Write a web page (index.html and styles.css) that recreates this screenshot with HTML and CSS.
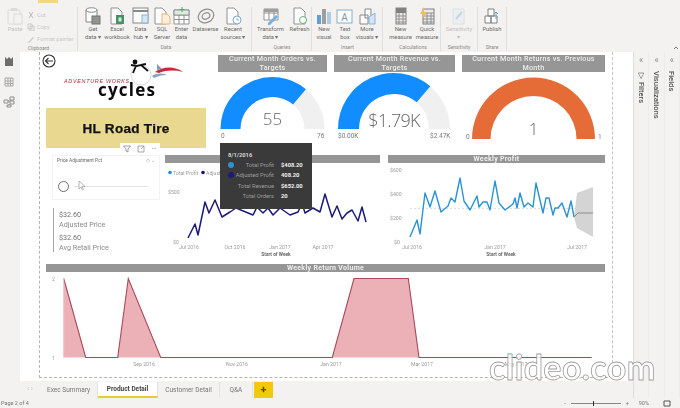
FILE: index.html
```html
<!DOCTYPE html>
<html lang="en">
<head>
<meta charset="utf-8">
<title>Product Detail</title>
<link rel="stylesheet" href="styles.css">
</head>
<body>
<div class="app">
  <header class="ribbon">
    <div class="home-mark"></div>
    <section class="group g-clip">
      <div class="btns clip-btns">
        <div class="btn w-24 faded">
          <svg class="ico" viewBox="0 0 20 18"><rect x="3" y="3" width="12" height="14" rx="1" fill="none" stroke="#d8d6d2"/><rect x="9" y="7" width="8" height="10" fill="#f3f2f1" stroke="#d8d6d2"/><rect x="6" y="1" width="6" height="3" fill="#d8d6d2"/></svg>
          <span>Paste</span>
        </div>
        <ul class="clip-list">
          <li><svg viewBox="0 0 8 8"><path d="M2 1l4 6M6 1L2 7" stroke="#bdbbb8" fill="none"/></svg>Cut</li>
          <li><svg viewBox="0 0 8 8"><path d="M1 1h4v5H1zM3 3h4v5H3z" stroke="#c4c2bf" fill="none" stroke-width=".8"/></svg>Copy</li>
          <li><svg viewBox="0 0 8 8"><path d="M1 7l5-5 1 1-5 5z" fill="#cfcdca"/></svg>Format painter</li>
        </ul>
      </div>
      <div class="group-label">Clipboard</div>
    </section>
    <section class="group g-data">
      <div class="btns">
        <div class="btn w-24">
          <svg class="ico" viewBox="0 0 20 18"><path d="M3 3c0-3 11-3 11 0v12H3z" fill="#fff" stroke="#6e6e6e"/><path d="M3 3c0 3 11 3 11 0" fill="none" stroke="#6e6e6e"/><rect x="9" y="9" width="8" height="8" fill="#7c7c7c" stroke="#555"/></svg>
          <span>Get<br>data ▾</span>
        </div>
        <div class="btn w-24">
          <svg class="ico" viewBox="0 0 20 18"><path d="M4 1h7l4 4v12H4z" fill="#fff" stroke="#7a7a7a"/><rect x="9" y="8" width="8" height="9" fill="#1b7a43"/><rect x="11.5" y="10.5" width="3" height="4" fill="#d5ead9"/></svg>
          <span>Excel<br>workbook</span>
        </div>
        <div class="btn w-23">
          <svg class="ico" viewBox="0 0 20 18"><rect x="2" y="1" width="15" height="15" fill="#fff" stroke="#6e6e6e"/><path d="M2 4h15" stroke="#6e6e6e" stroke-width="2"/><rect x="11" y="8" width="6" height="8" fill="#cfe3f2" stroke="#6fa8d4"/></svg>
          <span>Data<br>hub ▾</span>
        </div>
        <div class="btn w-20">
          <svg class="ico" viewBox="0 0 20 18"><path d="M3 1h7l4 4v12H3z" fill="#fff" stroke="#7a7a7a"/><path d="M10 7h5l3 3v7h-8z" fill="#fbeeda" stroke="#e3a95a"/></svg>
          <span>SQL<br>Server</span>
        </div>
        <div class="btn w-19">
          <svg class="ico" viewBox="0 0 20 18"><path d="M2 3h15v14H2zM2 8h15M2 12.500h15M7 3v14M12 3v14" fill="#fff" stroke="#707070" stroke-width=".9"/><path d="M2 3h15v5H2z" fill="#d7e9dc" stroke="#707070" stroke-width=".9"/><path d="M10 0v5M7.500 2.500h5" stroke="#2f8f57"/></svg>
          <span>Enter<br>data</span>
        </div>
        <div class="btn w-29">
          <svg class="ico" viewBox="0 0 20 18"><ellipse cx="10" cy="9" rx="8" ry="6.500" transform="rotate(-25 10 9)" fill="none" stroke="#777" stroke-width="1.200"/><ellipse cx="10" cy="9" rx="4" ry="3" transform="rotate(-25 10 9)" fill="none" stroke="#777" stroke-width="1.200"/></svg>
          <span>Dataverse</span>
        </div>
        <div class="btn w-26">
          <svg class="ico" viewBox="0 0 20 18"><path d="M4 1h7l4 4v12H4z" fill="#fff" stroke="#7a7a7a"/><circle cx="14" cy="13" r="4" fill="#fff" stroke="#5a9bd0"/><path d="M14 11v2h2" stroke="#5a9bd0" fill="none" stroke-width=".8"/></svg>
          <span>Recent<br>sources ▾</span>
        </div>
      </div>
      <div class="group-label">Data</div>
    </section>
    <section class="group g-query">
      <div class="btns">
        <div class="btn w-35">
          <svg class="ico" viewBox="0 0 20 18"><path d="M3 2h14v11H3zM3 6h14M8 2v11M13 2v11" fill="#fff" stroke="#707070" stroke-width=".9"/><path d="M3 2h14v3H3z" fill="#8a8a8a"/><path d="M7 16l8-8 2 2-8 8H7z" fill="#5aa0d8"/></svg>
          <span>Transform<br>data ▾</span>
        </div>
        <div class="btn w-23">
          <svg class="ico" viewBox="0 0 20 18"><path d="M4 1h7l4 4v12H4z" fill="#fff" stroke="#7a7a7a"/><circle cx="13" cy="13" r="3.500" fill="#fff" stroke="#4d9a69"/></svg>
          <span>Refresh</span>
        </div>
      </div>
      <div class="group-label">Queries</div>
    </section>
    <section class="group g-insert">
      <div class="btns">
        <div class="btn w-22">
          <svg class="ico" viewBox="0 0 20 18"><rect x="3" y="8" width="4" height="9" fill="#3f8ccc"/><rect x="8" y="2" width="4" height="15" fill="#8a8a8a"/><rect x="13" y="5" width="4" height="12" fill="#9cc3e4"/></svg>
          <span>New<br>visual</span>
        </div>
        <div class="btn w-20">
          <svg class="ico" viewBox="0 0 20 18"><rect x="2" y="3" width="15" height="13" fill="#fff" stroke="#6e9cc4"/><text x="9.500" y="13.500" text-anchor="middle" class="ico-letter">A</text></svg>
          <span>Text<br>box</span>
        </div>
        <div class="btn w-24">
          <svg class="ico" viewBox="0 0 20 18"><path d="M3 8h8v9H3zM8 2h6v9H8z" fill="#fff" stroke="#707070"/><path d="M12 10l6-4v11h-6z" fill="#cfe3f2" stroke="#6fa8d4"/></svg>
          <span>More<br>visuals ▾</span>
        </div>
      </div>
      <div class="group-label">Insert</div>
    </section>
    <section class="group g-calc">
      <div class="btns">
        <div class="btn w-29">
          <svg class="ico" viewBox="0 0 20 18"><rect x="5" y="1" width="10" height="16" fill="#e6e6e6" stroke="#666"/><rect x="5" y="1" width="10" height="5" fill="#666"/><path d="M5 9h10M5 12h10M5 15h10M8 6v11M12 6v11" stroke="#666" stroke-width=".8"/></svg>
          <span>New<br>measure</span>
        </div>
        <div class="btn w-24">
          <svg class="ico" viewBox="0 0 20 18"><rect x="6" y="2" width="11" height="15" fill="#e6e6e6" stroke="#666"/><path d="M6 9h11M6 12h11M6 15h11M10 6v11M14 6v11M6 6h11" stroke="#666" stroke-width=".8"/><path d="M7 0L3 7h3l-1 5 5-7H7z" fill="#efb034"/></svg>
          <span>Quick<br>measure</span>
        </div>
      </div>
      <div class="group-label">Calculations</div>
    </section>
    <section class="group g-sens">
      <div class="btns">
        <div class="btn w-full faded">
          <svg class="ico" viewBox="0 0 20 18"><path d="M4 2h11v15H4z" fill="#e9eff2" stroke="#d7dde0"/><path d="M7 12l6-7" stroke="#b9cfdc" stroke-width="2"/></svg>
          <span>Sensitivity<br>▾</span>
        </div>
      </div>
      <div class="group-label">Sensitivity</div>
    </section>
    <section class="group g-share">
      <div class="btns">
        <div class="btn w-full">
          <svg class="ico" viewBox="0 0 20 18"><path d="M3 9h6v7H3zM9 9h6v7H9zM6 2h6v7H6z" fill="#fff" stroke="#666"/><path d="M14 12V5M12 7l2-2 2 2" stroke="#4f97d0" fill="none"/></svg>
          <span>Publish</span>
        </div>
      </div>
      <div class="group-label">Share</div>
    </section>
    <svg class="collapse" viewBox="0 0 6 4"><path d="M1 3l2-2 2 2" fill="none" stroke="#777"/></svg>
  </header>

  <div class="workspace">
    <nav class="rail">
      <svg viewBox="0 0 12 12"><path d="M2 2l2 2 2-2 2 2 2-2v9H2z" fill="#6d6d6d"/></svg>
      <svg viewBox="0 0 12 12"><path d="M2 2h8v8H2zM2 5h8M2 7.500h8M5 2v8M7.500 2v8" fill="none" stroke="#9a9a9a" stroke-width=".8"/></svg>
      <svg viewBox="0 0 12 12"><path d="M1 4h4v3H1zM7 1h4v3H7zM7 5h4v3H7zM4 9h4v2H4zM5 5h2M6 8v1" fill="none" stroke="#858585" stroke-width=".9"/></svg>
    </nav>

    <main class="center">
      <div class="view">
        <div class="canvas">
          <svg class="back" viewBox="0 0 14 14"><circle cx="7" cy="7" r="6" fill="#fff" stroke="#333" stroke-width="1.100"/><path d="M11 7H3.500M6.500 4L3.500 7l3 3" fill="none" stroke="#333" stroke-width="1.100"/></svg>

          <div class="top-row">
            <div class="brand-col">
              <svg class="logo" viewBox="46 52 160 56">
                <text x="64" y="82.500" class="logo-adv">ADVENTURE WORKS</text>
                <text x="98" y="96" class="logo-cycles">cycles</text>
                <circle cx="141" cy="75" r="10" fill="none" stroke="#c9ccd2" stroke-width=".7"/>
                <circle cx="135" cy="62" r="2.400" fill="#111"/>
                <path d="M133 73l3-7 5-1 7 6M137 66l-6-1M141 65l5-1" fill="none" stroke="#111" stroke-width="1.800"/>
                <path d="M155 72c8-6 20-6 28 0-8-2-16-2-24 1z" fill="#c8283a"/>
                <path d="M152 76c5-3 10-3 15-1-5 0-9 1-13 3z" fill="#8aa3c8"/>
                <path d="M157 64l5 5-5 1z" fill="#7f9ac6"/>
              </svg>
              <div class="name-card">HL Road Tire</div>
            </div>
            <div class="gauges">
              <div class="gauge g-orders">
                <h2 class="vis-title">Current Month Orders vs. Targets</h2>
                <svg class="gauge-svg" viewBox="218 72 109 83">
                  <path d="M220.500 129a52 52 0 0 1 104 0h-20a32 32 0 0 0-64 0z" fill="#f0f0f0"/>
                  <path d="M220.500 129a52 52 0 0 1 85.400-39.800l-12.900 15.300a32 32 0 0 0-52.500 24.500z" fill="#118dff"/>
                  <text x="272.500" y="125" text-anchor="middle" class="gauge-val">55</text>
                  <text x="221" y="138" class="gauge-lim">0</text>
                  <text x="317" y="138" class="gauge-lim">76</text>
                </svg>
              </div>
              <div class="gauge g-revenue">
                <h2 class="vis-title">Current Month Revenue vs. Targets</h2>
                <svg class="gauge-svg" viewBox="334 72 121 83">
                  <path d="M338 129a56 56 0 0 1 112 0h-21a35 35 0 0 0-70 0z" fill="#f0f0f0"/>
                  <path d="M338 129a56 56 0 0 1 92.300-42.700l-13.600 16a35 35 0 0 0-57.700 26.700z" fill="#118dff"/>
                  <text x="394" y="127" text-anchor="middle" class="gauge-val gauge-val-lg">$1.79K</text>
                  <text x="338" y="138" class="gauge-lim">$0.00K</text>
                  <text x="430" y="138" class="gauge-lim">$2.47K</text>
                </svg>
              </div>
              <div class="gauge g-returns">
                <h2 class="vis-title">Current Month Returns vs. Previous Month</h2>
                <svg class="gauge-svg" viewBox="462 72 143 83">
                  <path d="M472 139a61.500 61.500 0 0 1 123 0h-18.500a43 43 0 0 0-86 0z" fill="#e66c37"/>
                  <text x="533.500" y="135" text-anchor="middle" class="gauge-val">1</text>
                  <text x="466" y="139" class="gauge-lim">0</text>
                  <text x="598" y="139" class="gauge-lim">1</text>
                </svg>
              </div>
            </div>
          </div>

          <div class="mid-row">
            <div class="side-col">
              <div class="slicer">
                <div class="vis-header">
                  <svg viewBox="0 0 8 8"><path d="M.5 1h7L5 4v3L3 6V4z" fill="none" stroke="#777" stroke-width=".7"/></svg>
                  <svg viewBox="0 0 8 8"><path d="M1 1h6v6H1zM4 4l3-3" fill="none" stroke="#888" stroke-width=".7"/></svg>
                  <span class="dots">···</span>
                </div>
                <div class="slicer-head"><span>Price Adjustment Pct</span><span class="slicer-tools">◇ ⌄</span></div>
                <div class="slider">
                  <span class="knob"></span>
                  <span class="track"></span>
                  <svg class="cursor" viewBox="0 0 8 11"><path d="M1 1v8l2-2 1.500 3 1-.5L4 6.500h3z" fill="#fff" stroke="#999" stroke-width=".7"/></svg>
                </div>
              </div>
              <div class="kpis">
                <div class="kpi-val">$32.60</div>
                <div class="kpi-lab">Adjusted Price</div>
                <div class="kpi-val kpi-second">$32.60</div>
                <div class="kpi-lab">Avg Retail Price</div>
              </div>
            </div>

            <div class="chart c-adjusted">
              <div class="vis-bar"></div>
              <svg class="chart-svg" viewBox="165 163 215 101">
                <circle cx="170" cy="172.500" r="1.800" fill="#118dff"/>
                <text x="173" y="174.500" class="axis">Total Profit</text>
                <circle cx="203" cy="172.500" r="1.800" fill="#12107a"/>
                <text x="206" y="174.500" class="axis">Adjusted Profit</text>
                <text x="168" y="194" class="axis">$500</text>
                <text x="173" y="244" class="axis">$0</text>
                <text x="189" y="249" text-anchor="middle" class="axis">Jul 2016</text>
                <text x="235" y="249" text-anchor="middle" class="axis">Oct 2016</text>
                <text x="280" y="249" text-anchor="middle" class="axis">Jan 2017</text>
                <text x="323" y="249" text-anchor="middle" class="axis">Apr 2017</text>
                <text x="276" y="256" text-anchor="middle" class="axis-title">Start of Week</text>
                <polyline class="line-navy" points="188,238 195,224 198,235 205,202 209,213 215,200 222,217 230,212 236,208 253,215 257,207 263,213 268,208 273,215 280,208 290,215 298,212 302,203 305,213 313,208 320,212 325,194 332,217 337,206 342,219 347,213 352,210 358,221 362,207 366,222"/>
              </svg>
              <div class="tooltip">
                <div class="tt-date">8/1/2016</div>
                <div class="tt-rows">
                  <span class="tt-lab"><i class="dot dot-blue"></i>Total Profit</span><b>$408.20</b>
                  <span class="tt-lab"><i class="dot dot-navy"></i>Adjusted Profit</span><b>408.20</b>
                  <span class="tt-lab">Total Revenue</span><b>$652.00</b>
                  <span class="tt-lab">Total Orders</span><b>20</b>
                </div>
              </div>
            </div>

            <div class="chart c-profit">
              <h2 class="vis-bar">Weekly Profit</h2>
              <svg class="chart-svg" viewBox="388 163 217 101">
                <text x="390" y="172" class="axis">$600</text>
                <text x="390" y="196" class="axis">$400</text>
                <text x="390" y="220" class="axis">$200</text>
                <text x="394" y="244" class="axis">$0</text>
                <text x="412" y="249" text-anchor="middle" class="axis">Jul 2016</text>
                <text x="495" y="249" text-anchor="middle" class="axis">Jan 2017</text>
                <text x="577" y="249" text-anchor="middle" class="axis">Jul 2017</text>
                <text x="501" y="256" text-anchor="middle" class="axis-title">Start of Week</text>
                <path d="M410 208.500h184" stroke="#cfcfcf" stroke-width=".7" stroke-dasharray="2 2"/>
                <polygon points="574,217 577,193 593,187 593,237 577,228" fill="#d4d4d4"/>
                <path d="M574 217l4-4h15" fill="none" stroke="#8a8a8a"/>
                <polyline class="line-blue" points="410,237 417,220 420,234 425,193 430,207 435,191 441,212 448,206 451,198 455,202 460,178 464,201 470,210 477,196 479,207 483,202 487,202 490,210 495,181 499,203 505,210 513,204 515,198 517,208 520,193 524,207 528,203 533,207 536,183 543,213 546,198 549,198 553,215 555,208 558,208 562,203 567,217 571,201 574,217"/>
              </svg>
            </div>
          </div>

          <div class="bottom-row">
            <h2 class="vis-bar">Weekly Return Volume</h2>
            <svg class="chart-svg" viewBox="46 273 559 103">
              <polygon class="area" points="63.700,279 85.700,358 117.700,358 128.300,279 160.700,358 332.300,358 354,279 408.300,279 419,358 591.700,358 63.700,358"/>
              <polyline class="area-line" points="63.700,279 85.700,358 117.700,358 128.300,279 160.700,358 332.300,358 354,279 408.300,279 419,358 591.700,358"/>
              <path d="M63.700 279v79" stroke="#f0c4c8"/>
              <text x="52" y="281" class="axis">2</text>
              <text x="52" y="360" class="axis">1</text>
              <text x="144" y="366" text-anchor="middle" class="axis">Sep 2016</text>
              <text x="237" y="366" text-anchor="middle" class="axis">Nov 2016</text>
              <text x="331" y="366" text-anchor="middle" class="axis">Jan 2017</text>
              <text x="422" y="366" text-anchor="middle" class="axis">Mar 2017</text>
              <text x="516" y="366" text-anchor="middle" class="axis">May 2017</text>
            </svg>
          </div>
        </div>
      </div>
      <div class="tabs">
        <span class="tab-nav">‹ ›</span>
        <span class="tab t-exec">Exec Summary</span>
        <span class="tab t-product">Product Detail</span>
        <span class="tab t-customer">Customer Detail</span>
        <span class="tab t-qa">Q&amp;A</span>
        <span class="tab-add">+</span>
      </div>
    </main>

    <aside class="panes">
      <div class="pane"><span class="chev">«</span><span class="pane-name">▽ Filters</span></div>
      <div class="pane"><span class="chev">«</span><span class="pane-name">Visualizations</span></div>
      <div class="pane"><span class="chev">«</span><span class="pane-name">Fields</span></div>
    </aside>
  </div>

  <footer class="status">
    <span>Page 2 of 4</span>
    <div class="zoom">
      <span>-</span>
      <span class="zoom-track"><i></i></span>
      <span>+</span>
      <span class="zoom-pct">90%</span>
      <svg viewBox="0 0 8 7"><path d="M1 1h6v5H1z" fill="none" stroke="#555"/></svg>
    </div>
  </footer>

  <div class="watermark">clideo.com</div>
</div>
</body>
</html>
```
FILE: styles.css
```css
* { box-sizing: border-box; }
html, body { margin: 0; padding: 0; }
body { width: 680px; height: 408px; overflow: hidden; background: #fff; font-family: Roboto, "Open Sans", sans-serif; }
.app { position: relative; width: 680px; height: 408px; display: flex; flex-direction: column; filter: blur(.45px); }

/* ribbon */
.ribbon { position: relative; flex: 0 0 52px; height: 52px; display: flex; background: #f3f2f1; color: #6a6a6a; font-size: 5.800px; }
.home-mark { position: absolute; left: 38px; top: 0; width: 20px; height: 3px; background: #f2d977; }
.group { display: flex; flex-direction: column; margin-top: 7px; height: 44px; border-right: 1px solid #e0dfdd; }
.g-clip { width: 78px; }
.g-data { width: 174px; padding-left: 3px; }
.g-query { width: 60px; padding-left: 1px; }
.g-insert { width: 71px; padding-left: 1px; }
.g-calc { width: 58px; padding-left: 3px; }
.g-sens { width: 37px; }
.g-share { width: 29px; }
.btns { flex: 1; display: flex; }
.btn { display: flex; flex-direction: column; align-items: center; text-align: center; line-height: 8px; white-space: nowrap; }
.btn span { margin-top: 0; }
.ico { width: 20px; height: 18px; flex: none; opacity: .8; }
.ico-letter { font: 10px Roboto, sans-serif; fill: #5d7f9c; }
.w-19 { width: 19px; } .w-20 { width: 20px; } .w-22 { width: 22px; } .w-23 { width: 23px; }
.w-24 { width: 24px; } .w-26 { width: 26px; } .w-29 { width: 29px; } .w-35 { width: 35px; }
.w-full { width: 100%; }
.faded { color: #c2c0bd; }
.group-label { height: 7px; line-height: 6px; text-align: center; font-size: 5px; color: #8a8886; }
.clip-btns { padding-left: 3px; }
.clip-list { list-style: none; margin: 2px 0 0; padding: 0; color: #cbc9c6; font-size: 5.600px; line-height: 12px; white-space: nowrap; }
.clip-list li { display: flex; align-items: center; gap: 2px; }
.clip-list svg { width: 8px; height: 8px; }
.collapse { position: absolute; right: 1px; top: 46px; width: 6px; height: 4px; }

/* workspace */
.workspace { flex: 0 0 346px; height: 346px; display: flex; }
.rail { flex: 0 0 20px; background: #f3f2f1; display: flex; flex-direction: column; align-items: center; gap: 8.500px; padding-top: 3px; padding-right: 2px; }
.rail svg { width: 12px; height: 12px; }
.center { flex: 0 0 613px; display: flex; flex-direction: column; }
.view { flex: 0 0 329px; height: 329px; padding-left: 19px; background: #fff; }
.canvas { position: relative; width: 574px; height: 326px; padding-left: 6px; border-left: 1px dashed #b5b5b5; border-right: 1px dashed #c4c4c4; border-bottom: 1px dashed #b5b5b5; }
.back { position: absolute; left: 2px; top: 2px; width: 14px; height: 14px; }

.top-row { display: flex; height: 103px; }
.brand-col { flex: 0 0 160px; }
.logo { display: block; width: 160px; height: 56px; }
.logo-adv { font: italic 400 5.400px "Liberation Sans", sans-serif; fill: #b62a3a; letter-spacing: .72px; }
.logo-cycles { font: 700 17px "Open Sans", sans-serif; fill: #0b0b0b; letter-spacing: 1.200px; }
.name-card { height: 40px; display: flex; align-items: center; justify-content: center; background: #e9d88f; color: #111; font: 700 13.500px "Liberation Sans", sans-serif; letter-spacing: .3px; -webkit-text-stroke: .25px #111; }
.gauges { margin-left: 12px; padding-top: 3px; display: flex; gap: 7px; }
.gauge { display: flex; flex-direction: column; }
.g-orders { width: 109px; }
.g-revenue { width: 121px; }
.g-returns { width: 143px; }
.vis-title { margin: 0; height: 17px; padding: 0 8px; background: #969696; color: #ececec; font-size: 7.200px; font-weight: 500; line-height: 8.500px; text-align: center; letter-spacing: .25px; overflow: hidden; }
.gauge-svg { display: block; width: 100%; height: 83px; }
.gauge-val { font: 300 17px "Open Sans", sans-serif; fill: #666; }
.gauge-val-lg { font-size: 18px; letter-spacing: -.7px; }
.gauge-lim { font: 6.500px Roboto, sans-serif; fill: #7a7a7a; }

.mid-row { display: flex; height: 109px; }
.side-col { flex: 0 0 119px; padding-left: 6px; }
.slicer { position: relative; width: 108px; height: 45px; padding: 2px 4px; border: 1px solid #f2f2f2; }
.slicer-head { display: flex; justify-content: space-between; font-size: 4.800px; color: #666; line-height: 6px; }
.slicer-tools { color: #999; }
.vis-header { position: absolute; left: 67px; top: -13px; width: 40px; height: 12px; display: flex; align-items: center; justify-content: space-around; background: #fff; }
.vis-header svg { width: 8px; height: 8px; }
.dots { font-size: 7px; color: #777; }
.slider { position: relative; display: flex; align-items: center; gap: 5px; margin-top: 17px; margin-left: 1px; }
.knob { width: 11px; height: 11px; flex: none; border: 1px solid #6f6f6f; border-radius: 50%; background: #fff; }
.track { width: 74px; height: 1px; background: #e3e3e3; }
.cursor { position: absolute; left: 20px; top: -1px; width: 8px; height: 11px; }
.kpis { margin: 8px 0 0 1px; padding: 2px 0 0 5px; height: 44px; border-left: 1px solid #a6a6a6; font-size: 7.200px; line-height: 10px; color: #737373; }
.kpi-second { margin-top: 3px; }
.kpi-lab { color: #8a8a8a; }

.chart { position: relative; }
.c-adjusted { flex: 0 0 215px; }
.c-profit { flex: 0 0 217px; margin-left: 8px; }
.vis-bar { margin: 0; height: 8px; background: #969696; color: #eee; font-size: 7px; font-weight: 700; line-height: 8px; text-align: center; letter-spacing: .3px; }
.chart-svg { display: block; width: 100%; height: 101px; }
.axis { font: 5.200px Roboto, sans-serif; fill: #9a9a9a; }
.axis-title { font: 700 4.800px Roboto, sans-serif; fill: #666; }
.line-navy { fill: none; stroke: #1c1a78; stroke-width: 1.500; stroke-linejoin: round; }
.line-blue { fill: none; stroke: #2a93d5; stroke-width: 1.400; stroke-linejoin: round; }

.tooltip { position: absolute; left: 55px; top: -12px; width: 92px; height: 66px; padding: 8px 0 0 8px; background: #3a3a3a; color: #fff; font-size: 5.800px; }
.tt-date { font-weight: 700; color: #d5d5d5; line-height: 8px; }
.tt-rows { display: grid; grid-template-columns: 46px auto; column-gap: 7px; row-gap: 0; margin-top: 1px; line-height: 10.300px; }
.tt-rows b { color: #f0f0f0; }
.tt-lab { display: flex; justify-content: flex-end; position: relative; color: #9d9d9d; white-space: nowrap; }
.dot { position: absolute; left: 0; top: 2px; width: 6px; height: 6px; border-radius: 50%; }
.dot-blue { background: #2a93d5; }
.dot-navy { background: #1c1a78; }

.bottom-row { width: 559px; }
.bottom-row .chart-svg { height: 104px; }
.area { fill: #ecb1b7; }
.area-line { fill: none; stroke: #a8485a; stroke-width: 1.100; }

/* tabs */
.tabs { flex: 1; display: flex; align-items: stretch; padding: 1px 0 0 0; background: #f3f2f1; color: #777; font-size: 6.500px; }
.tab-nav { width: 20px; line-height: 15px; text-align: center; color: #c4c4c4; font-size: 7px; }
.tab { display: flex; align-items: center; justify-content: center; height: 16px; border-right: 1px solid #e4e3e1; white-space: nowrap; }
.t-exec { width: 58px; }
.t-product { width: 60px; background: #fff; border-bottom: 2px solid #e8c93a; color: #444; font-weight: 700; }
.t-customer { width: 62px; }
.t-qa { width: 33px; }
.tab-add { width: 19px; height: 16px; margin-left: 1px; background: #f2c811; color: #5c4a00; font-size: 11px; font-weight: 700; line-height: 16px; text-align: center; }

/* panes */
.panes { flex: 0 0 47px; display: flex; background: #f3f2f1; border-left: 1px solid #dedede; }
.pane { flex: 1; display: flex; flex-direction: column; align-items: center; padding-top: 2px; border-right: 1px solid #ececeb; color: #555; }
.chev { font-size: 9px; line-height: 12px; color: #8a8a8a; }
.pane-name { margin-top: 5px; writing-mode: vertical-rl; font-size: 7.600px; font-weight: 500; white-space: nowrap; }

/* status */
.status { flex: 0 0 10px; height: 10px; display: flex; justify-content: space-between; align-items: center; padding: 0 9px 0 1px; background: #f3f2f1; color: #777; font-size: 5.500px; }
.zoom { display: flex; align-items: center; gap: 3px; }
.zoom-track { position: relative; width: 50px; height: 1px; background: #888; margin: 0 2px; }
.zoom-track i { position: absolute; left: 22px; top: -2px; width: 1px; height: 5px; background: #333; }
.zoom-pct { margin: 0 11px 0 7px; }
.zoom svg { width: 8px; height: 7px; }

/* watermark */
.watermark { position: absolute; left: 489px; top: 346px; color: rgba(255,255,255,.82); font: 700 34px Lato, sans-serif; letter-spacing: .4px; -webkit-text-stroke: .8px #9c9c9c; }
```
